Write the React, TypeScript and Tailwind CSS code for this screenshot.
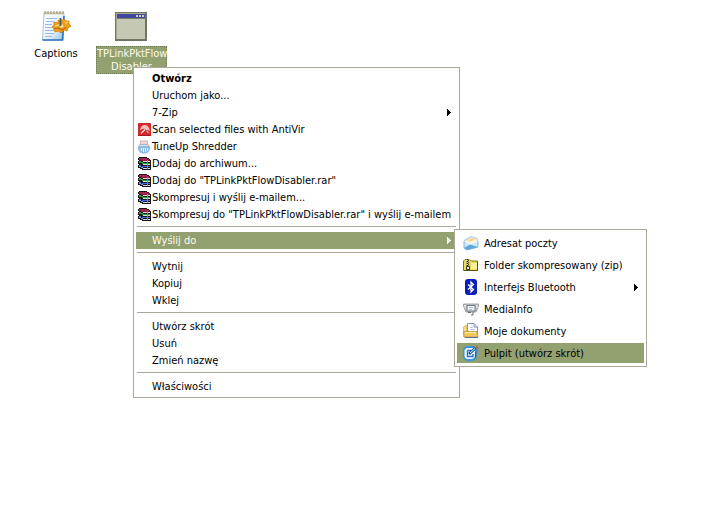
import React from "react";
import clsx from "clsx";

type MenuEntry = {
    label: string;
    icon?: React.ReactNode;
    bold?: boolean;
    active?: boolean;
    children?: MenuEntry[];
    arrow?: boolean;
};

/* ---------- Desktop icons ---------- */

function CaptionsIcon() {
    return (
        <svg width="32" height="32" viewBox="0 0 32 32" aria-hidden="true">
            <defs>
                <linearGradient id="sheet" x1="0" y1="0" x2="1" y2="1">
                    <stop offset="0" stopColor="#ffffff" />
                    <stop offset="0.6" stopColor="#e6f2fc" />
                    <stop offset="1" stopColor="#8cc0ec" />
                </linearGradient>
            </defs>
            <path d="M4 3H24L23 30H2.5Z" fill="url(#sheet)" stroke="#8fb0d0" strokeWidth="0.8" />
            <path d="M2.5 30H22.5L24 6" fill="none" stroke="#2f72bc" strokeWidth="1.6" />
            <path d="M4 3.5H24" stroke="#d8cfa4" strokeWidth="2" />
            <path d="M5 1V4M8 1V4M11 1V4M14 1V4M17 1V4M20 1V4M23 1V4" stroke="#8f886e" />
            <path d="M6 8.5H17M6 11.5H14M5 14.5H12M5 17.5H12M5 20.5H14M5 23.5H14M5 26.5H12" stroke="#9dbbe0" />
            <path
                d="M18 10L21 11L24 9L26 11L29 11L29 14L31 16L28 18L27 21L24 20L21 23L18 21L15 22L14 19L12 17L14 15L14 12L18 13Z"
                fill="#ee9f1c"
                stroke="#d07f10"
                strokeWidth="0.8"
            />
            <path d="M14 18.5L19 18L22 20L26 17.5" fill="none" stroke="#b9690c" strokeWidth="1.2" />
            <path d="M15 16L19 15M25 13L28 12" stroke="#ffd568" strokeWidth="1.4" />
            <circle cx="21.5" cy="16" r="1.8" fill="#ffe6a3" />
            <path d="M20.5 8V16" stroke="#3e5f66" strokeWidth="1.8" />
        </svg>
    );
}

function ProgramIcon() {
    return (
        <svg width="32" height="32" viewBox="0 0 32 32" shapeRendering="crispEdges" aria-hidden="true">
            <path d="M0 2H32V31H0Z" fill="#6f7560" />
            <path d="M1 3H30V29H1Z" fill="#a5ab8e" />
            <path d="M2 4H30V8H2Z" fill="#404a9a" />
            <path d="M21 5H23V7H21ZM24 5H26V7H24ZM27 5H29V7H27Z" fill="#c9cdb9" />
            <path d="M2 9H30V29H2Z" fill="#c5c9b3" />
            <path d="M2 8H30V9H2Z" fill="#777d70" />
        </svg>
    );
}

/* ---------- Menu icons ---------- */

function AntiVirIcon() {
    return (
        <svg width="14" height="14" viewBox="0 0 14 14" aria-hidden="true">
            <rect x="0" y="0" width="13" height="13" rx="1" fill="#d3292d" />
            <path d="M2 7.5C2 4 4.5 2 7 2C10 2 12 5 11.5 8.5Q10 6 8 7Q6.5 5 4.5 6Q3 6 2 7.5Z" fill="#f3bdb8" />
            <path d="M7 6.5L3 10.5" stroke="#f9dedb" strokeWidth="1.2" fill="none" />
            <path d="M8.5 7.5L10.5 10" stroke="#f3bdb8" strokeWidth="1.1" fill="none" />
            <path d="M0 12.5H13" stroke="#a8191c" />
        </svg>
    );
}

function ShredderIcon() {
    return (
        <svg width="14" height="14" viewBox="0 0 14 14" aria-hidden="true">
            <path d="M2.5 1H9.5V5H2.5Z" fill="#efd9d8" stroke="#c7a4a4" strokeWidth="0.8" />
            <path d="M0.5 6Q1 4 3 4H9Q11 4 11.5 6V8H0.5Z" fill="#a9b8d0" />
            <path d="M0.5 7H11.5Q12 12 8 13H4Q0 12 0.5 7Z" fill="#8cc3ea" stroke="#7fb0d8" strokeWidth="0.7" />
            <path d="M3.5 8V11M5.5 8V12M7.5 8V12M9.5 8V11" stroke="#f1faff" />
            <path d="M2 5.5H10" stroke="#dbe3ee" />
        </svg>
    );
}

function RarIcon() {
    return (
        <svg width="14" height="14" viewBox="0 0 14 14" shapeRendering="crispEdges" aria-hidden="true">
            <path d="M1 0H9V1H11V2H12V3H13V13H4V12H2V11H0V8H1V7H0V4H1V3H0V1H1Z" fill="#1b1517" />
            <path d="M1 1H9V2H11V3H4V2H1Z" fill="#a02850" />
            <path d="M1 2H4V3H12V4H3V3H1Z" fill="#8a1c42" />
            <path d="M5 4H12V5H5Z" fill="#eed3da" />
            <path d="M1 4H3V5H5V6H12V7H4V6H1Z" fill="#2f9c4c" />
            <path d="M5 7H12V8H5Z" fill="#cfe8d5" />
            <path d="M1 8H3V9H12V10H4V9H1Z" fill="#4468d8" />
            <path d="M1 9H3V10H5V11H3V10H1Z" fill="#7aa0f4" />
            <path d="M5 11H12V12H5Z" fill="#cfdcf8" />
            <path d="M9 3H10V12H9Z" fill="#b5803f" />
        </svg>
    );
}

function MailIcon() {
    return (
        <svg width="16" height="16" viewBox="0 0 16 16" aria-hidden="true">
            <path d="M1 5L8 1L14 3L15 5V12L4 15L1 13Z" fill="#9fcdee" />
            <path d="M2 6L8 2L14 4L13 8L6 9Z" fill="#fff1ce" />
            <path d="M4 5L9 3L13 4.5L7 6.5Z" fill="#f9d391" />
            <path d="M1 6L7 9L15 6V12L4 15L1 13Z" fill="#cfe9fa" />
            <path d="M1 13L7 9.5L15 12L4 15Z" fill="#5ea6dd" />
            <path d="M1 6L7 9L15 6" stroke="#f7fcff" fill="none" />
            <path d="M1 6V13L4 15L15 12V6" stroke="#6fa6cf" strokeWidth="0.8" fill="none" />
        </svg>
    );
}

function ZipIcon() {
    return (
        <svg width="16" height="16" viewBox="0 0 16 16" aria-hidden="true">
            <path d="M0.5 4L2 2.5H7L8.5 4H14.5V13.5H0.5Z" fill="#e9de55" stroke="#77741f" />
            <path d="M8 6H14V12H8Z" fill="#f6f0a0" />
            <path d="M1 13.5H14.5V5" stroke="#55551b" fill="none" />
            <path d="M3 2H7V13H3Z" fill="#cfcb72" />
            <path d="M4.5 2V10" stroke="#1d1d16" strokeWidth="1.6" strokeDasharray="1 1" />
            <path d="M5.5 3V10" stroke="#55552d" strokeDasharray="1 1" />
            <path d="M3.5 9.5H6.5V12.5H3.5Z" fill="#f5f5e0" stroke="#33331d" />
        </svg>
    );
}

function BluetoothIcon() {
    return (
        <svg width="16" height="16" viewBox="0 0 16 16" aria-hidden="true">
            <rect x="2" y="0" width="12" height="16" rx="3" fill="#0a1fb8" />
            <path d="M5 5.5L10.5 10.5L8 13V3L10.5 5.5L5 10.5" fill="none" stroke="#fff" strokeWidth="1.3" />
        </svg>
    );
}

function MediaInfoIcon() {
    return (
        <svg width="16" height="16" viewBox="0 0 16 16" aria-hidden="true">
            <path d="M0.5 3H15.5V5L13 11H3L0.5 5Z" fill="#c3c7ca" stroke="#8a8f94" strokeWidth="0.8" />
            <path d="M4 4.5H12V10H4Z" fill="#edf4f8" stroke="#6d747a" strokeWidth="0.9" />
            <path d="M2 4V7M14 4V7" stroke="#f0f0f0" />
            <path d="M6 6.5H10M6 8.5H9" stroke="#a9bfce" />
            <path d="M5 11.5H8M10 11V14H8" stroke="#666b70" fill="none" />
        </svg>
    );
}

function DocumentsIcon() {
    return (
        <svg width="16" height="16" viewBox="0 0 16 16" aria-hidden="true">
            <path d="M0.5 4L4 2V13L1 14Z" fill="#f8e08a" stroke="#cda64a" strokeWidth="0.8" />
            <path d="M4.5 0.5H11L14.5 4V11H4.5Z" fill="#fff" stroke="#8094bd" />
            <path d="M11 1V4H14" fill="none" stroke="#8094bd" />
            <path d="M7 4.5H10M7 6.5H12" stroke="#b5c7e3" />
            <path d="M0.5 8.5H14L15 14H1Z" fill="#f3c95c" stroke="#c2923a" strokeWidth="0.8" />
            <path d="M2 9.5H13" stroke="#fff0b0" />
            <path d="M2 14.5H15" stroke="#5f73a8" />
        </svg>
    );
}

function DesktopIcon() {
    return (
        <svg width="16" height="16" viewBox="0 0 16 16" aria-hidden="true">
            <path d="M3 1H11L15 5L13 14L10 16H3L0 13V4Z" fill="#3d94d6" />
            <path d="M3.5 3H10L12 5V12L9.5 14H3.5L1.5 12V5Z" fill="#e9f6ff" />
            <path d="M4.5 5.5H8M4.5 5.5V11.5H10V9" stroke="#2c74bd" strokeWidth="1.4" fill="none" />
            <path d="M6 9L12.5 3" stroke="#1f5ba0" strokeWidth="2.8" />
            <path d="M7 8L12 3.5" stroke="#d9efff" />
            <path d="M13 1.5L15 3.5" stroke="#c9523a" strokeWidth="1.4" />
            <path d="M12.5 7V12.5" stroke="#1b5aa5" />
        </svg>
    );
}

function SubmenuArrow() {
    return (
        <svg width="4" height="7" viewBox="0 0 4 7" shapeRendering="crispEdges" aria-hidden="true">
            <path d="M0 0H1V1H2V2H3V3H4V4H3V5H2V6H1V7H0Z" fill="currentColor" />
        </svg>
    );
}

/* ---------- Data ---------- */

const sendTo: MenuEntry[] = [
    { label: "Adresat poczty", icon: <MailIcon /> },
    { label: "Folder skompresowany (zip)", icon: <ZipIcon /> },
    { label: "Interfejs Bluetooth", icon: <BluetoothIcon />, arrow: true },
    { label: "MediaInfo", icon: <MediaInfoIcon /> },
    { label: "Moje dokumenty", icon: <DocumentsIcon /> },
    { label: "Pulpit (utwórz skrót)", icon: <DesktopIcon />, active: true },
];

const groups: MenuEntry[][] = [
    [
        { label: "Otwórz", bold: true },
        { label: "Uruchom jako..." },
        { label: "7-Zip", arrow: true },
        { label: "Scan selected files with AntiVir", icon: <AntiVirIcon /> },
        { label: "TuneUp Shredder", icon: <ShredderIcon /> },
        { label: "Dodaj do archiwum...", icon: <RarIcon /> },
        { label: 'Dodaj do "TPLinkPktFlowDisabler.rar"', icon: <RarIcon /> },
        { label: "Skompresuj i wyślij e-mailem...", icon: <RarIcon /> },
        { label: 'Skompresuj do "TPLinkPktFlowDisabler.rar" i wyślij e-mailem', icon: <RarIcon /> },
    ],
    [{ label: "Wyślij do", active: true, arrow: true, children: sendTo }],
    [{ label: "Wytnij" }, { label: "Kopiuj" }, { label: "Wklej" }],
    [{ label: "Utwórz skrót" }, { label: "Usuń" }, { label: "Zmień nazwę" }],
    [{ label: "Właściwości" }],
];

/* ---------- Menus ---------- */

function SendToMenu({ items }: { items: MenuEntry[] }) {
    return (
        <ul role="menu" className="absolute left-full -top-[3px] -ml-[3px] w-[193px] border border-[#aca899] bg-white p-[2px] text-black">
            {items.map((item) => (
                <li key={item.label} role="none" className="py-px">
                    <button
                        type="button"
                        role="menuitem"
                        className={clsx("flex h-5 w-full items-center pl-[6px] pr-[6px] text-left", item.active && "bg-[#93a070]")}
                    >
                        <span className="w-[21px] shrink-0">{item.icon}</span>
                        <span className="grow whitespace-nowrap">{item.label}</span>
                        {item.arrow && <SubmenuArrow />}
                    </button>
                </li>
            ))}
        </ul>
    );
}

function ContextMenu() {
    return (
        <div role="menu" className="absolute left-[133px] top-[67px] w-[327px] border border-[#aca899] bg-white p-[2px]">
            {groups.map((group, i) => (
                <React.Fragment key={i}>
                    {i > 0 && <hr className="mx-px mt-[3px] mb-[5px] border-t border-[#aca899]" />}
                    <ul role="none">
                        {group.map((item) => (
                            <li key={item.label} role="none" className="relative">
                                <button
                                    type="button"
                                    role="menuitem"
                                    className={clsx(
                                        "flex h-[17px] w-full items-center pl-[2px] pr-[6px] text-left",
                                        item.bold && "font-bold",
                                        item.active && "bg-[#93a070] text-[#fbfbee]"
                                    )}
                                >
                                    <span className="w-[14px] shrink-0">{item.icon}</span>
                                    <span className="grow whitespace-nowrap">{item.label}</span>
                                    {item.arrow && <SubmenuArrow />}
                                </button>
                                {item.children && <SendToMenu items={item.children} />}
                            </li>
                        ))}
                    </ul>
                </React.Fragment>
            ))}
        </div>
    );
}

export default function App() {
    return (
        <main className="relative min-h-screen overflow-hidden bg-white font-['Tahoma','DejaVu_Sans_Condensed','DejaVu_Sans',sans-serif] text-[11px] leading-[13px] text-black">
            <div className="flex items-start gap-1 pl-5 pt-[10px]">
                <button type="button" className="flex w-[72px] flex-col items-center gap-1">
                    <CaptionsIcon />
                    <span className="px-[2px] py-px">Captions</span>
                </button>
                <button type="button" className="flex w-[71px] flex-col gap-1">
                    <span className="pl-[19px]">
                        <ProgramIcon />
                    </span>
                    <span className="w-full border border-dotted border-[#6c7a4c] bg-[#93a070] text-center text-[#fbfbee]">
                        TPLinkPktFlow
                        <br />
                        Disabler
                    </span>
                </button>
            </div>

            <ContextMenu />
        </main>
    );
}
